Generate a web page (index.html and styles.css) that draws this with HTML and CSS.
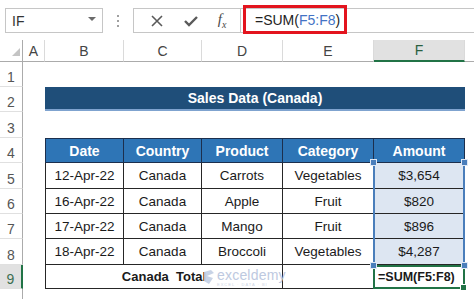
FILE: index.html
```html
<!DOCTYPE html>
<html lang="en">
<head>
    <meta charset="UTF-8">
    <meta name="viewport" content="width=device-width, initial-scale=1.0">
    <title>Sales Data (Canada)</title>
    <link rel="stylesheet" href="styles.css">
</head>
<body>
    <div class="toolbar">
        <div class="namebox">
            <span>IF</span>
            <span class="caret"></span>
        </div>
        <div class="grip"><i></i><i></i><i></i></div>
        <div class="fbtns">
            <svg width="14" height="14" viewBox="0 0 14 14"><path d="M2 2 L12 12 M12 2 L2 12" stroke="#5a5a5a" stroke-width="1.6" fill="none"/></svg>
            <svg width="16" height="14" viewBox="0 0 16 14"><path d="M2 7 L6 11 L14 3" stroke="#5a5a5a" stroke-width="2.4" fill="none"/></svg>
            <span class="fx">f<sub>x</sub></span>
        </div>
        <div class="finput">
            <div class="highlight">=SUM(<span class="ref">F5:F8</span>)</div>
        </div>
    </div>

    <div class="sheet">
        <!-- column headers -->
        <div class="corner"><span></span></div>
        <div class="colhead">A</div>
        <div class="colhead">B</div>
        <div class="colhead">C</div>
        <div class="colhead">D</div>
        <div class="colhead">E</div>
        <div class="colhead current">F</div>
        <div class="colhead last"></div>

        <!-- row headers -->
        <div class="rowhead r1">1</div>
        <div class="rowhead r2">2</div>
        <div class="rowhead r3">3</div>
        <div class="rowhead r4">4</div>
        <div class="rowhead r5">5</div>
        <div class="rowhead r6">6</div>
        <div class="rowhead r7">7</div>
        <div class="rowhead r8">8</div>
        <div class="rowhead r9 current">9</div>
        <div class="rowhead r10"></div>

        <div class="title">Sales Data (Canada)</div>

        <!-- row 4 -->
        <div class="cell head cb r4">Date</div>
        <div class="cell head cc r4">Country</div>
        <div class="cell head cd r4">Product</div>
        <div class="cell head ce r4">Category</div>
        <div class="cell head cf r4">Amount</div>

        <!-- row 5 -->
        <div class="cell cb r5">12-Apr-22</div>
        <div class="cell cc r5">Canada</div>
        <div class="cell cd r5">Carrots</div>
        <div class="cell ce r5">Vegetables</div>
        <div class="cell amount cf r5">$3,654</div>

        <!-- row 6 -->
        <div class="cell cb r6">16-Apr-22</div>
        <div class="cell cc r6">Canada</div>
        <div class="cell cd r6">Apple</div>
        <div class="cell ce r6">Fruit</div>
        <div class="cell amount cf r6">$820</div>

        <!-- row 7 -->
        <div class="cell cb r7">17-Apr-22</div>
        <div class="cell cc r7">Canada</div>
        <div class="cell cd r7">Mango</div>
        <div class="cell ce r7">Fruit</div>
        <div class="cell amount cf r7">$896</div>

        <!-- row 8 -->
        <div class="cell cb r8">18-Apr-22</div>
        <div class="cell cc r8">Canada</div>
        <div class="cell cd r8">Broccoli</div>
        <div class="cell ce r8">Vegetables</div>
        <div class="cell amount cf r8">$4,287</div>

        <!-- row 9 -->
        <div class="cell cb total r9">Canada&nbsp; Total</div>
        <div class="cell ce r9"></div>
        <div class="cell cf active r9">=SUM(F5:F8)</div>

        <div class="watermark">
            <svg width="12" height="16" viewBox="0 0 12 16"><path d="M1 3 L8 1 L11 4 L4 7 L10 9 L6 15 L1 12 Z" fill="#c3cfe4"/></svg>
            <div class="wm-text">
                <span class="wm-name">exceldemy</span>
                <span class="wm-sub">EXCEL · DATA · BI</span>
            </div>
        </div>

        <div class="selection">
            <span class="handle tl"></span>
            <span class="handle tr"></span>
            <span class="handle bl"></span>
            <span class="handle br"></span>
        </div>
    </div>
</body>
</html>
```

FILE: styles.css
```css
body {
    margin: 0;
    font-family: "Liberation Sans", Arial, sans-serif;
    background-color: #ffffff;
    width: 474px;
    height: 299px;
    overflow: hidden;
}

/* formula bar */
.toolbar {
    display: flex;
    align-items: flex-start;
    height: 40px;
    padding: 8px 0 0 5px;
    box-sizing: border-box;
}
.namebox {
    width: 98px;
    height: 25px;
    border: 1px solid #c6c6c6;
    box-sizing: border-box;
    display: flex;
    align-items: center;
    justify-content: space-between;
    padding: 0 6px 0 6px;
    font-size: 14px;
    color: #333;
}
.caret {
    width: 0;
    height: 0;
    border-left: 4px solid transparent;
    border-right: 4px solid transparent;
    border-top: 4px solid #6b6b6b;
    margin-bottom: 3px;
}
.grip {
    width: 30px;
    height: 25px;
    display: flex;
    flex-direction: column;
    align-items: center;
    justify-content: center;
    gap: 3px;
}
.grip i {
    width: 2px;
    height: 2px;
    background-color: #a0a0a0;
}
.fbtns {
    width: 108px;
    height: 25px;
    border: 1px solid #c6c6c6;
    box-sizing: border-box;
    display: flex;
    align-items: center;
    justify-content: space-around;
    padding: 0 4px 0 6px;
}
.fx {
    font-family: "Liberation Serif", serif;
    font-style: italic;
    font-size: 15px;
    color: #4a4a4a;
}
.fx sub {
    font-size: 10px;
}
.finput {
    flex: 1;
    height: 25px;
    border: 1px solid #c6c6c6;
    border-right: none;
    box-sizing: border-box;
    margin-left: -1px;
}
.highlight {
    display: inline-flex;
    align-items: center;
    height: 29px;
    margin: -4px 0 0 2px;
    padding: 0 4px 0 9px;
    border: 3px solid #e3141e;
    box-sizing: border-box;
    font-size: 14px;
    color: #222;
}
.ref {
    color: #4473c5;
}

/* grid */
.sheet {
    display: grid;
    grid-template-columns: 23px 22px 79px 78px 81px 91px 91px 1fr;
    grid-template-rows: 22px 25px 25px 26px 25px 26px 25px 25px 26px 24px 1fr;
    height: 259px;
    font-size: 13.5px;
    color: #1a1a1a;
}
.corner {
    grid-row: 1;
    grid-column: 1;
    border-right: 1px solid #ababab;
    border-bottom: 1px solid #ababab;
    display: flex;
    align-items: flex-end;
    justify-content: flex-end;
    padding: 0 2px 5px 0;
}
.corner span {
    width: 0;
    height: 0;
    border-left: 8px solid transparent;
    border-bottom: 8px solid #c4c4c4;
}
.colhead {
    grid-row: 1;
    border-right: 1px solid #dadada;
    border-bottom: 1px solid #ababab;
    display: flex;
    align-items: center;
    justify-content: center;
    font-size: 14px;
    color: #444;
}
.colhead.current {
    background-color: #e1e1e1;
    border-bottom: 2px solid #217346;
    color: #2a5f3f;
}
.colhead.last {
    border-right: none;
}
.rowhead {
    grid-column: 1;
    border-right: 1px solid #ababab;
    border-bottom: 1px solid #e0e0e0;
    display: flex;
    align-items: flex-end;
    justify-content: center;
    padding-bottom: 1px;
    box-sizing: border-box;
    font-size: 14px;
    color: #555;
}
.rowhead.current {
    background-color: #e1e1e1;
    border-right: 2px solid #217346;
    color: #3c6f52;
}
.r1 { grid-row: 2; }
.r2 { grid-row: 3; }
.r3 { grid-row: 4; }
.r4 { grid-row: 5; }
.r5 { grid-row: 6; }
.r6 { grid-row: 7; }
.r7 { grid-row: 8; }
.r8 { grid-row: 9; }
.r9 { grid-row: 10; }
.r10 { grid-row: 11; border-bottom: none; }

.cb { grid-column: 3; }
.cc { grid-column: 4; }
.cd { grid-column: 5; }
.ce { grid-column: 6; }
.cf { grid-column: 7; }

.title {
    grid-row: 3;
    grid-column: 3 / 8;
    background-color: #1f4e79;
    border-bottom: 2px solid #7fa3cf;
    margin-bottom: 1px;
    color: #fff;
    font-weight: bold;
    font-size: 14px;
    display: flex;
    align-items: center;
    justify-content: center;
}

/* table cells */
.cell {
    border-right: 1px solid #262626;
    border-bottom: 1px solid #262626;
    box-sizing: border-box;
    display: flex;
    align-items: center;
    justify-content: center;
    white-space: nowrap;
}
.cell.cb {
    border-left: 1px solid #262626;
}
.cell.head {
    background-color: #2e75b6;
    border-top: 1px solid #1c2f4d;
    border-right-color: #1c2f4d;
    border-bottom-color: #1c2f4d;
    color: #fff;
    font-weight: bold;
    font-size: 14px;
}
.cell.head.cb {
    border-left-color: #1c2f4d;
}
.cell.amount {
    background-color: #dde6f2;
}
.cell.total {
    grid-column: 3 / 6;
    font-weight: bold;
    font-size: 13px;
}
.cell.active {
    justify-content: flex-start;
    padding-left: 3px;
    font-weight: bold;
    font-size: 12.5px;
    border: 2px solid #217346;
    margin-left: -1px;
    position: relative;
}
.cell.active::after {
    content: "";
    position: absolute;
    right: -4px;
    bottom: -4px;
    width: 5px;
    height: 5px;
    background-color: #217346;
    border: 1px solid #fff;
}

/* reference range F5:F8 */
.selection {
    grid-row: 6 / 10;
    grid-column: 7;
    border-left: 2px solid #4a7ebb;
    border-right: 2px solid #4a7ebb;
    margin: 0 0 0 -1px;
    position: relative;
}
.handle {
    position: absolute;
    width: 5px;
    height: 5px;
    background-color: #4a7ebb;
    border: 1px solid #dfe8f5;
}
.handle.tl { left: -5px; top: -4px; }
.handle.tr { right: -5px; top: -4px; }
.handle.bl { left: -5px; bottom: -4px; }
.handle.br { right: -5px; bottom: -4px; }

.watermark {
    grid-row: 10;
    grid-column: 5 / 7;
    display: flex;
    align-items: center;
    gap: 2px;
    margin-left: 1px;
    opacity: 0.9;
}
.wm-text {
    display: flex;
    flex-direction: column;
    line-height: 1;
}
.wm-name {
    font-size: 14px;
    color: #b7c4dd;
    letter-spacing: 0.2px;
}
.wm-sub {
    font-size: 4px;
    color: #c9d2e3;
    letter-spacing: 1px;
    margin-top: 1px;
}
```
